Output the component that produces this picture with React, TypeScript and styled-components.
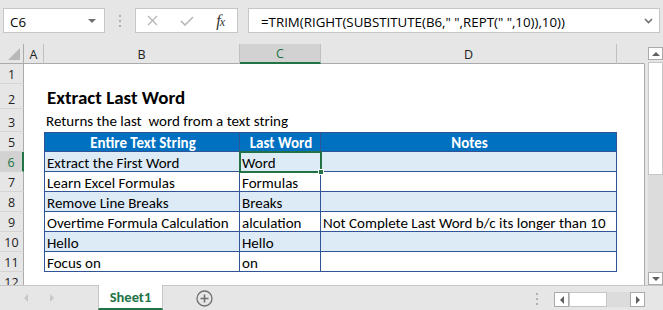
import React from "react";
import styled, { createGlobalStyle } from "styled-components";

const CAL = `"Carlito", "Lato", "Liberation Sans", sans-serif`;
const UI = `"Open Sans", "Noto Sans", sans-serif`;
const GREEN = "#217346";
const BLUE = "#0070c0";
const LINE = "#2f5597";
const PALE = "#ddebf7";
const CHROME = "#e6e6e6";

const GlobalStyle = createGlobalStyle`
  html, body { margin: 0; padding: 0; background: ${CHROME}; }
  * { box-sizing: border-box; }
`;

type Row = { n: number; h: number; b?: string; c?: string; d?: string };

const rows: Row[] = [
  { n: 1, h: 20 },
  { n: 2, h: 25 },
  { n: 3, h: 23 },
  { n: 5, h: 20, b: "Entire Text String", c: "Last Word", d: "Notes" },
  { n: 6, h: 20, b: "Extract the First Word", c: "Word" },
  { n: 7, h: 20, b: "Learn Excel Formulas", c: "Formulas" },
  { n: 8, h: 20, b: "Remove Line Breaks", c: "Breaks" },
  { n: 9, h: 20, b: "Overtime Formula Calculation", c: "alculation", d: "Not Complete Last Word b/c its longer than 10" },
  { n: 10, h: 20, b: "Hello", c: "Hello" },
  { n: 11, h: 20, b: "Focus on", c: "on" },
  { n: 12, h: 20 },
];

const Frame = styled.div`
  width: 663px;
  height: 310px;
  display: flex;
  flex-direction: column;
  background: ${CHROME};
  overflow: hidden;
`;

const FormulaRow = styled.div`
  height: 44px;
  flex: none;
  display: flex;
  align-items: flex-start;
  padding: 8px 0 0 3px;
`;

const Field = styled.div<{ $w: number }>`
  width: ${(p) => p.$w}px;
  height: 25px;
  background: #fff;
  border: 1px solid #c6c6c6;
  display: flex;
  align-items: center;
  font-family: ${UI};
  font-size: 13.3px;
  color: #000;
`;

const NameText = styled.span`
  flex: 1;
  padding: 2px 0 0 6px;
`;

const Grip = styled.div`
  width: 30px;
  height: 25px;
  display: flex;
  align-items: center;
  justify-content: center;
`;

const IconSlot = styled.div`
  width: 36px;
  height: 23px;
  display: flex;
  align-items: center;
  justify-content: center;
`;

const Fx = styled.span`
  font-family: "Liberation Serif", serif;
  font-style: italic;
  font-size: 16px;
  color: #333;
  letter-spacing: -1px;
  small { font-size: 12px; }
`;

const FormulaText = styled.span`
  flex: 1;
  padding: 2px 0 0 12px;
  white-space: pre;
`;

const Body = styled.div`
  display: flex;
  flex: none;
  height: 241px;
`;

const Sheet = styled.div`
  width: 645px;
  height: 241px;
  overflow: hidden;
  display: grid;
  grid-template-columns: 24px 20px 196px 81px 296px 28px;
  grid-template-rows: 20px ${rows.map((r) => `${r.h}px`).join(" ")};
  background: #fff;
`;

const Corner = styled.div`
  background: ${CHROME};
  border-right: 1px solid #ababab;
  border-bottom: 1px solid #ababab;
  display: flex;
  align-items: flex-end;
  justify-content: flex-end;
  padding: 0 3px 3px 0;
`;

const ColHead = styled.div<{ $sel?: boolean; $last?: boolean }>`
  background: ${(p) => (p.$sel ? "#d2d2d2" : CHROME)};
  color: ${(p) => (p.$sel ? GREEN : "#222")};
  border-right: 1px solid ${(p) => (p.$last ? CHROME : "#c0c0c0")};
  border-bottom: ${(p) => (p.$sel ? `2px solid ${GREEN}` : "1px solid #ababab")};
  font-family: ${UI};
  font-size: 12.5px;
  display: flex;
  align-items: center;
  justify-content: center;
  padding-top: 1px;
`;

const RowHead = styled.div<{ $sel?: boolean }>`
  background: ${(p) => (p.$sel ? "#d2d2d2" : CHROME)};
  color: ${(p) => (p.$sel ? GREEN : "#222")};
  border-right: ${(p) => (p.$sel ? `2px solid ${GREEN}` : "1px solid #ababab")};
  border-bottom: 1px solid #d4d4d4;
  font-family: ${UI};
  font-size: 12.5px;
  line-height: 14px;
  display: flex;
  align-items: flex-end;
  justify-content: center;
  padding-bottom: 1px;
`;

type Fill = "none" | "head" | "pale" | "white";

const Cell = styled.div<{ $fill?: Fill; $first?: boolean; $top?: boolean; $edge?: boolean }>`
  position: relative;
  min-width: 0;
  background: ${(p) =>
    p.$fill === "head" ? BLUE : p.$fill === "pale" ? PALE : p.$fill === "white" ? "#fff" : "transparent"};
  color: ${(p) => (p.$fill === "head" ? "#fff" : "#000")};
  font-weight: ${(p) => (p.$fill === "head" ? 700 : 400)};
  justify-content: ${(p) => (p.$fill === "head" ? "center" : "flex-start")};
  border-right: ${(p) =>
    p.$edge ? "1px solid #ababab" : p.$fill && p.$fill !== "none" ? `1px solid ${LINE}` : "none"};
  border-bottom: ${(p) => (p.$fill && p.$fill !== "none" ? `1px solid ${LINE}` : "none")};
  border-left: ${(p) => (p.$first ? `1px solid ${LINE}` : "none")};
  border-top: ${(p) => (p.$top ? `1px solid ${LINE}` : "none")};
  font-family: ${CAL};
  font-size: 15px;
  display: flex;
  align-items: flex-end;
  padding: 0 0 0 2px;
  white-space: nowrap;
  line-height: 15px;
`;

const Title = styled.span`
  font-size: 19px;
  font-weight: 700;
  line-height: 22px;
  padding-left: 1px;
`;

const Subtitle = styled.span`
  white-space: pre;
  padding-bottom: 3px;
`;

const ActiveFrame = styled.div`
  position: absolute;
  left: -1px;
  top: -1px;
  right: -2px;
  bottom: -2px;
  border: 2px solid ${GREEN};
  z-index: 2;
  pointer-events: none;
`;

const FillHandle = styled.div`
  position: absolute;
  right: -4px;
  bottom: -4px;
  width: 6px;
  height: 6px;
  background: ${GREEN};
  border: 1px solid #fff;
`;

const VScroll = styled.div`
  width: 18px;
  display: flex;
  flex-direction: column;
  padding: 3px 0 0 3px;
`;

const ArrowBox = styled.div<{ $w?: number; $h?: number }>`
  width: ${(p) => p.$w ?? 15}px;
  height: ${(p) => p.$h ?? 13}px;
  flex: none;
  background: #fff;
  border: 1px solid #ababab;
  display: flex;
  align-items: center;
  justify-content: center;
`;

const Thumb = styled.div<{ $w?: number; $h?: number }>`
  width: ${(p) => (p.$w ? `${p.$w}px` : "15px")};
  height: ${(p) => (p.$h ? `${p.$h}px` : "15px")};
  flex: none;
  background: #fff;
  border: 1px solid #c6c6c6;
`;

const Track = styled.div<{ $w?: number }>`
  flex: 1;
  ${(p) => (p.$w ? `flex: none; width: ${p.$w}px;` : "")}
  background: #dcdcdc;
`;

const TabBar = styled.div`
  height: 25px;
  flex: none;
  display: flex;
  align-items: stretch;
  border-top: 1px solid #c6c6c6;
`;

const NavArrows = styled.div`
  width: 98px;
  display: flex;
  align-items: center;
  padding-left: 24px;
  gap: 22px;
`;

const SheetTab = styled.div`
  width: 65px;
  margin-top: -1px;
  background: #fff;
  border-left: 1px solid #c6c6c6;
  border-right: 1px solid #c6c6c6;
  border-bottom: 2px solid ${GREEN};
  color: ${GREEN};
  font-family: ${CAL};
  font-weight: 700;
  font-size: 14.5px;
  display: flex;
  align-items: center;
  justify-content: center;
  padding-top: 1px;
`;

const AddSheet = styled.div`
  width: 82px;
  display: flex;
  align-items: center;
  justify-content: center;
`;

const Spacer = styled.div`
  flex: 1;
`;

const HScroll = styled.div`
  display: flex;
  align-items: flex-start;
  padding-top: 6px;
  margin-right: 18px;
  margin-left: 10px;
`;

const Tri = ({ dir, color = "#606060", s = 4 }: { dir: "up" | "down" | "left" | "right"; color?: string; s?: number }) => {
  const pts = {
    up: `0,${s} ${s},0 ${2 * s},${s}`,
    down: `0,0 ${2 * s},0 ${s},${s}`,
    left: `${s},0 ${s},${2 * s} 0,${s}`,
    right: `0,0 0,${2 * s} ${s},${s}`,
  }[dir];
  const w = dir === "up" || dir === "down" ? 2 * s : s;
  const h = dir === "up" || dir === "down" ? s : 2 * s;
  return (
    <svg width={w} height={h} viewBox={`0 0 ${w} ${h}`}>
      <polygon points={pts} fill={color} />
    </svg>
  );
};

const Dots = () => (
  <svg width="3" height="12" viewBox="0 0 3 12">
    <rect x="0" y="0" width="2" height="2" fill="#b0b0b0" />
    <rect x="0" y="5" width="2" height="2" fill="#b0b0b0" />
    <rect x="0" y="10" width="2" height="2" fill="#b0b0b0" />
  </svg>
);

export default function App() {
  return (
    <Frame>
      <GlobalStyle />
      <FormulaRow>
        <Field $w={102}>
          <NameText>C6</NameText>
          <span style={{ paddingRight: 8, display: "flex" }}>
            <Tri dir="down" color="#707070" />
          </span>
        </Field>
        <Grip>
          <Dots />
        </Grip>
        <Field $w={103}>
          <IconSlot>
            <svg width="11" height="11" viewBox="0 0 11 11">
              <path d="M1 1 L10 10 M10 1 L1 10" stroke="#b4b4b4" strokeWidth="1.2" />
            </svg>
          </IconSlot>
          <IconSlot>
            <svg width="14" height="10" viewBox="0 0 14 10">
              <path d="M1 5 L5 9 L13 1" stroke="#b4b4b4" strokeWidth="1.5" fill="none" />
            </svg>
          </IconSlot>
          <IconSlot>
            <Fx>
              f<small>x</small>
            </Fx>
          </IconSlot>
        </Field>
        <div style={{ width: 10 }} />
        <Field $w={412}>
          <FormulaText>=TRIM(RIGHT(SUBSTITUTE(B6," ",REPT(" ",10)),10))</FormulaText>
          <span style={{ paddingRight: 6, display: "flex" }}>
            <svg width="9" height="6" viewBox="0 0 9 6">
              <path d="M1 1 L4.5 4.5 L8 1" stroke="#707070" strokeWidth="1.6" fill="none" />
            </svg>
          </span>
        </Field>
      </FormulaRow>

      <Body>
        <Sheet>
          <Corner>
            <svg width="12" height="12" viewBox="0 0 12 12">
              <polygon points="12,0 12,12 0,12" fill="#b8b8b8" />
            </svg>
          </Corner>
          <ColHead>A</ColHead>
          <ColHead>B</ColHead>
          <ColHead $sel>C</ColHead>
          <ColHead>D</ColHead>
          <ColHead $last />

          {rows.map((r) => {
            const inTable = r.n >= 5 && r.n <= 11;
            const fill: Fill = !inTable ? "none" : r.n === 5 ? "head" : r.n % 2 === 0 ? "pale" : "white";
            return (
              <React.Fragment key={r.n}>
                <RowHead $sel={r.n === 6}>{r.n}</RowHead>
                <Cell />
                <Cell $fill={fill} $first={inTable} $top={r.n === 5}>
                  {r.n === 2 && <Title>Extract Last Word</Title>}
                  {r.n === 3 && <Subtitle>Returns the last  word from a text string</Subtitle>}
                  {r.b}
                </Cell>
                <Cell $fill={fill} $top={r.n === 5}>
                  {r.c}
                  {r.n === 6 && (
                    <ActiveFrame>
                      <FillHandle />
                    </ActiveFrame>
                  )}
                </Cell>
                <Cell $fill={fill} $top={r.n === 5}>
                  {r.d}
                </Cell>
                <Cell $edge />
              </React.Fragment>
            );
          })}
        </Sheet>
        <VScroll>
          <ArrowBox>
            <Tri dir="up" />
          </ArrowBox>
          <div style={{ height: 2 }} />
          <Thumb $h={113} />
          <Track />
          <ArrowBox>
            <Tri dir="down" />
          </ArrowBox>
        </VScroll>
      </Body>

      <TabBar>
        <NavArrows>
          <Tri dir="left" color="#c8c8c8" />
          <Tri dir="right" color="#c8c8c8" />
        </NavArrows>
        <SheetTab>Sheet1</SheetTab>
        <AddSheet>
          <svg width="17" height="17" viewBox="0 0 17 17">
            <circle cx="8.5" cy="8.5" r="7.5" fill="none" stroke="#707070" strokeWidth="1.3" />
            <path d="M8.5 4.5 V12.5 M4.5 8.5 H12.5" stroke="#707070" strokeWidth="1.6" />
          </svg>
        </AddSheet>
        <Spacer />
        <Grip style={{ width: 14 }}>
          <Dots />
        </Grip>
        <HScroll>
          <ArrowBox $h={15}>
            <Tri dir="left" />
          </ArrowBox>
          <Thumb $w={38} />
          <Track $w={23} style={{ height: 15 }} />
          <ArrowBox $h={15}>
            <Tri dir="right" />
          </ArrowBox>
        </HScroll>
      </TabBar>
    </Frame>
  );
}
